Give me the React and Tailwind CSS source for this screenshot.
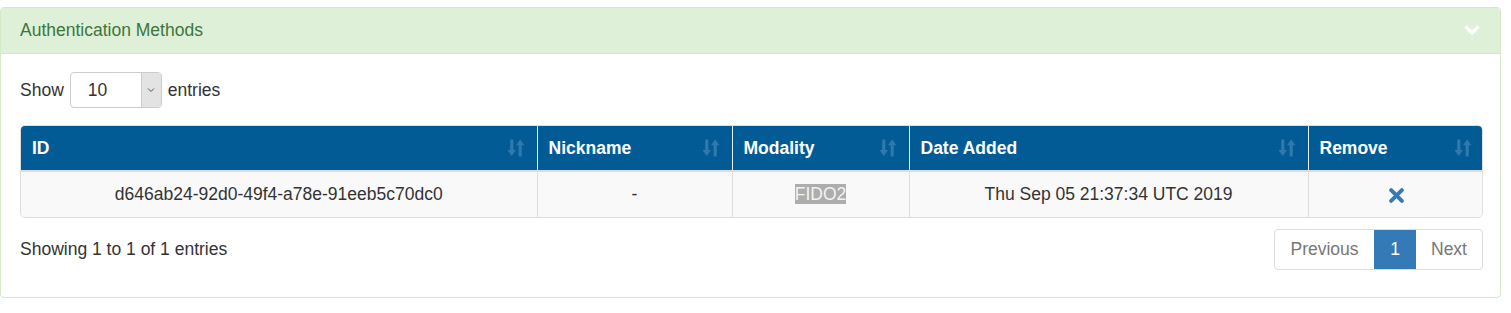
import React from "react";

function SortIcon() {
  return (
    <svg width="19" height="20" viewBox="0 0 18 18" className="shrink-0">
      <g fill="#2f79ad">
        <rect x="3" y="1" width="3" height="11" />
        <polygon points="0.5,11 8.5,11 4.5,16.5" />
        <rect x="11" y="5.5" width="3" height="11.5" />
        <polygon points="8.5,6.5 16.5,6.5 12.5,1" />
      </g>
    </svg>
  );
}

function Th({ children, w, last }) {
  return (
    <th
      className={`${w} h-[45px] px-[11px] text-left font-bold text-white ${last ? "" : "border-r border-[#e6eef5]"}`}
    >
      <div className="flex items-center justify-between">
        <span>{children}</span>
        <SortIcon />
      </div>
    </th>
  );
}

export default function App() {
  return (
    <div className="w-[1511px] h-[313px] bg-white pt-[7px] pr-[10px]" style={{ fontFamily: '"Liberation Sans", Arial, sans-serif' }}>
      <div className="border border-[#d6e9c6] rounded-[4px] text-[#333] text-[17.5px]">
        <div className="h-[46px] bg-[#dff0d8] border-b border-[#d6e9c6] rounded-t-[3px] flex items-center justify-between pl-[19px] pr-[19px]">
          <span className="text-[#3c763d]">Authentication Methods</span>
          <svg width="18" height="13" viewBox="0 0 16 12" className="-mt-[2px]">
            <polyline points="2,3 8,9 14,3" fill="none" stroke="white" strokeWidth="3.5" strokeLinecap="butt" />
          </svg>
        </div>
        <div className="pt-[18px] pl-[19px] pr-[17px] pb-[27px]">
          <div className="flex items-center h-[36px]">
            <span>Show</span>
            <div className="ml-[6px] w-[92px] h-[36px] border border-[#ccc] rounded-[4px] flex overflow-hidden">
              <div className="flex-1 flex items-center pl-[17px]">10</div>
              <div className="w-[20px] bg-[#e3e3e3] border-l border-[#ccc] flex items-center justify-center">
                <svg width="8" height="6" viewBox="0 0 8 6">
                  <polyline points="1,1.5 4,4.5 7,1.5" fill="none" stroke="#555" strokeWidth="1" />
                </svg>
              </div>
            </div>
            <span className="ml-[6px]">entries</span>
          </div>

          <div className="mt-[17px] w-[1463px] border border-[#ddd] rounded-[5px] overflow-hidden">
            <table className="w-full border-collapse table-fixed">
              <thead>
                <tr className="bg-[#035b96]">
                  <Th w="w-[516px]">ID</Th>
                  <Th w="w-[195px]">Nickname</Th>
                  <Th w="w-[177px]">Modality</Th>
                  <Th w="w-[399px]">Date Added</Th>
                  <Th w="w-[176px]" last>Remove</Th>
                </tr>
              </thead>
              <tbody>
                <tr className="bg-[#f9f9f9] border-t-2 border-[#ddd] h-[46px]">
                  <td className="text-center border-r border-[#ddd]">d646ab24-92d0-49f4-a78e-91eeb5c70dc0</td>
                  <td className="text-center border-r border-[#ddd]">-</td>
                  <td className="text-center border-r border-[#ddd]">
                    <span className="bg-[#adadad] text-[#f3f3f3]">FIDO2</span>
                  </td>
                  <td className="text-center border-r border-[#ddd]">Thu Sep 05 21:37:34 UTC 2019</td>
                  <td className="text-center">
                    <svg width="15" height="15" viewBox="0 0 14 14" className="inline-block">
                      <path d="M2 2 L12 12 M12 2 L2 12" stroke="#337ab7" strokeWidth="3.6" strokeLinecap="round" />
                    </svg>
                  </td>
                </tr>
              </tbody>
            </table>
          </div>

          <div className="mt-[11px] w-[1463px] flex items-center justify-between">
            <span>Showing 1 to 1 of 1 entries</span>
            <div className="flex h-[41px] border border-[#ddd] rounded-[4px] overflow-hidden">
              <div className="w-[99px] flex items-center justify-center text-[#777]">Previous</div>
              <div className="w-[42px] flex items-center justify-center bg-[#337ab7] text-white">1</div>
              <div className="w-[66px] flex items-center justify-center text-[#777]">Next</div>
            </div>
          </div>
        </div>
      </div>
    </div>
  );
}
